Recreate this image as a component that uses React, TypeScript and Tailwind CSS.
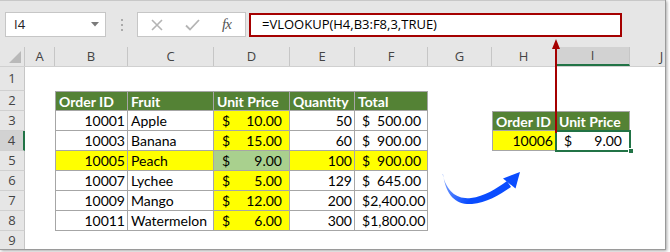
import React from "react";

const COLS = [30, 73, 86, 76, 65, 73, 64, 64, 74, 64];
const LETTERS = ["A", "B", "C", "D", "E", "F", "G", "H", "I", "J"];

type Cell = { node?: React.ReactNode; cls?: string; over?: React.ReactNode };

const G = "border-[#a6a6a6]";
const HDR = "bg-[#548235] text-white font-bold";

function Acc({ v, tight }: { v: string; tight?: boolean }) {
  return (
    <div className={`flex justify-between w-full ${tight ? "pl-[7px] pr-[6px]" : "pl-[8px] pr-[7px]"}`}>
      <span>$</span>
      <span>{v}</span>
    </div>
  );
}

function Row({ n, h, cells, active }: { n: number; h: number; cells: Cell[]; active?: boolean }) {
  return (
    <div className="flex shrink-0" style={{ height: h }}>
      <div
        className={`w-[25px] shrink-0 flex items-center justify-center text-[13px] text-[#444] border-b border-[#d0d0d0] font-['Open_Sans',sans-serif] ${
          active ? "bg-[#d2d2d2] border-r-2 border-r-[#217346]" : "bg-[#e6e6e6] border-r border-r-[#c6c6c6]"
        }`}
      >
        {n}
      </div>
      {COLS.map((w, i) => {
        const c = cells[i] || {};
        return (
          <div
            key={i}
            className={`shrink-0 relative flex items-center whitespace-nowrap text-[14px] text-black font-['Lato',sans-serif] ${c.cls || ""}`}
            style={{ width: w }}
          >
            {c.node}
            {c.over}
          </div>
        );
      })}
    </div>
  );
}

export default function App() {
  const b = (first: boolean) => `border-r border-b ${G} ${first ? "border-l" : ""}`;
  const data: [string, string, string, string, string, string[]][] = [
    ["10001", "Apple", "10.00", "50", "500.00", []],
    ["10003", "Banana", "15.00", "60", "900.00", []],
    ["10005", "Peach", "9.00", "100", "900.00", ["y"]],
    ["10007", "Lychee", "5.00", "129", "645.00", []],
    ["10009", "Mango", "12.00", "200", "2,400.00", []],
    ["10011", "Watermelon", "6.00", "300", "1,800.00", []],
  ];

  const rows: React.ReactNode[] = [];
  rows.push(<Row key={1} n={1} h={24} cells={[]} />);
  rows.push(
    <Row
      key={2}
      n={2}
      h={20}
      cells={[
        {},
        { node: <span className="pl-[3px]">Order ID</span>, cls: `${HDR} ${b(true)} border-t` },
        { node: <span className="pl-[3px]">Fruit</span>, cls: `${HDR} ${b(false)} border-t` },
        { node: <span className="pl-[3px]">Unit Price</span>, cls: `${HDR} ${b(false)} border-t` },
        { node: <span className="pl-[3px]">Quantity</span>, cls: `${HDR} ${b(false)} border-t` },
        { node: <span className="pl-[3px]">Total</span>, cls: `${HDR} ${b(false)} border-t` },
      ]}
    />
  );
  data.forEach((d, idx) => {
    const r = idx + 3;
    const yel = d[5].includes("y");
    const rowBg = yel ? "bg-[#ffff00]" : "bg-white";
    const cells: Cell[] = [
      {},
      { node: <span className="ml-auto pr-[2px]">{d[0]}</span>, cls: `${rowBg} ${b(true)}` },
      { node: <span className="pl-[3px]">{d[1]}</span>, cls: `${rowBg} ${b(false)}` },
      { node: <Acc v={d[2]} />, cls: `${yel ? "bg-[#a9d08e]" : "bg-[#ffff00]"} ${b(false)}` },
      { node: <span className="ml-auto pr-[2px]">{d[3]}</span>, cls: `${rowBg} ${b(false)}` },
      {
        node: d[4].length > 6 ? (
          <div className="flex w-full pl-[7px] pr-[6px]">
            <span>$</span>
            <span className="ml-auto">{d[4]}</span>
          </div>
        ) : (
          <Acc v={d[4]} tight />
        ),
        cls: `${rowBg} ${b(false)}`,
      },
    ];
    if (r === 3) {
      cells[7] = { node: <span className="pl-[3px]">Order ID</span>, cls: `${HDR} ${b(true)} border-t` };
      cells[8] = { node: <span className="pl-[3px]">Unit Price</span>, cls: `${HDR} ${b(false)} border-t` };
    }
    if (r === 4) {
      cells[7] = { node: <span className="ml-auto pr-[2px]">10006</span>, cls: `bg-[#ffff00] ${b(true)}` };
      cells[8] = {
        node: <Acc v="9.00" />,
        cls: `bg-white ${b(false)}`,
        over: (
          <>
            <div className="absolute -left-[1px] -top-[1px] w-[76px] h-[22px] border-2 border-[#217346]" />
            <div className="absolute left-[72px] top-[17px] w-[6px] h-[6px] bg-[#217346] border border-white" />
          </>
        ),
      };
    }
    rows.push(<Row key={r} n={r} h={20} cells={cells} active={r === 4} />);
  });
  rows.push(<Row key={9} n={9} h={20} cells={[]} />);

  return (
    <div className="w-[670px] h-[252px] bg-white relative overflow-hidden">
      <div className="w-[666px] h-[250px] flex flex-col overflow-hidden border-r border-b border-[#9a9a9a] shadow-[1px_1px_3px_rgba(0,0,0,0.35)] bg-white">
        {/* formula bar area */}
        <div className="h-[47px] shrink-0 bg-[#e6e6e6] border-t border-[#c8c8c8] flex items-start pt-[11px] pl-[5px] font-['Open_Sans',sans-serif]">
          <div className="w-[101px] h-[25px] bg-white border border-[#c6c6c6] flex items-center pl-[8px] pr-[6px] text-[13px] text-[#222]">
            <span>I4</span>
            <svg width="8" height="5" viewBox="0 0 8 5" className="ml-auto">
              <path d="M0 0 L8 0 L4 4.5 Z" fill="#7a7a7a" />
            </svg>
          </div>
          <div className="w-[31px] h-[25px] flex flex-col items-center justify-center gap-[3px] pl-[1px]">
            <span className="w-[2px] h-[2px] bg-[#aaa]" />
            <span className="w-[2px] h-[2px] bg-[#aaa]" />
            <span className="w-[2px] h-[2px] bg-[#aaa]" />
          </div>
          <div className="w-[109px] h-[25px] bg-white border border-[#c6c6c6] flex items-center">
            <svg width="12" height="12" viewBox="0 0 12 12" className="ml-[13px]">
              <path d="M1 1 L11 11 M11 1 L1 11" stroke="#b4b4b4" strokeWidth="1.6" />
            </svg>
            <svg width="15" height="12" viewBox="0 0 15 12" className="ml-[22px]">
              <path d="M1 6.5 L5 10.5 L14 1" stroke="#b4b4b4" strokeWidth="1.8" fill="none" />
            </svg>
            <span className="ml-[22px] text-[15px] italic text-[#555] font-['Liberation_Serif',serif] tracking-[-1px]">fx</span>
          </div>
          <div className="ml-[3px] mt-[1px] w-[373px] h-[24px] border-2 border-[#a50000] bg-white flex items-center pl-[11px] text-[13px] text-black">
            =VLOOKUP(H4,B3:F8,3,TRUE)
          </div>
        </div>
        {/* column headers */}
        <div className="flex h-[20px] shrink-0 bg-[#e6e6e6] border-b border-[#d0d0d0] font-['Open_Sans',sans-serif] text-[13px] text-[#444]">
          <div className="w-[25px] shrink-0 relative border-r border-[#c6c6c6]">
            <svg width="12" height="12" viewBox="0 0 12 12" className="absolute right-[3px] bottom-[3px]">
              <path d="M12 0 L12 12 L0 12 Z" fill="#b9b9b9" />
            </svg>
          </div>
          {COLS.map((w, i) => (
            <div
              key={i}
              className={`shrink-0 flex items-center justify-center border-r border-[#c6c6c6] ${
                i === 8 ? "bg-[#d2d2d2] border-b-2 border-b-[#217346]" : ""
              }`}
              style={{ width: w }}
            >
              {LETTERS[i]}
            </div>
          ))}
        </div>
        {rows}
      </div>

      {/* arrows */}
      <svg className="absolute left-0 top-0" width="670" height="252" viewBox="0 0 670 252">
        <path d="M556 46 L556 133" stroke="#a50000" strokeWidth="2" />
        <path d="M556 39 L552 49 L560 49 Z" fill="#a50000" />
        <defs>
          <linearGradient id="bl" x1="442" y1="174" x2="470" y2="200" gradientUnits="userSpaceOnUse">
            <stop offset="0" stopColor="#8fb0ff" />
            <stop offset="1" stopColor="#0a4cff" />
          </linearGradient>
        </defs>
        <path
          d="M442.5 174 C447 193 458 199.5 471 198 C484 196.5 496 189 507 181 L511 187 C499 195 486 203 472 204 C457 205 446 197 443 174 Z"
          fill="url(#bl)"
        />
        <path d="M520 172 L503 178.5 L515.5 188.5 Z" fill="#0a4cff" />
      </svg>
    </div>
  );
}
